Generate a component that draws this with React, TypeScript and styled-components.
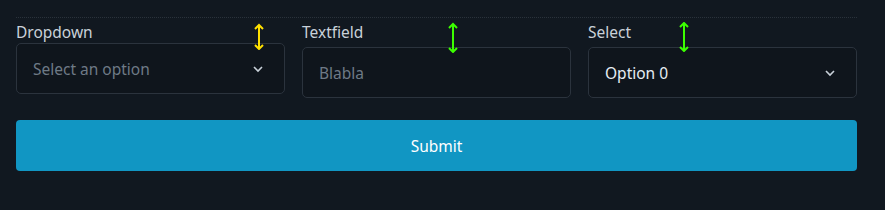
import styled, { createGlobalStyle } from 'styled-components';

const GlobalStyle = createGlobalStyle`
  html, body {
    margin: 0;
    background: #111820;
    font-family: "Noto Sans", "Open Sans", sans-serif;
  }
`;

const Page = styled.div`
  padding: 17px 28px 0 16px;
`;

const Row = styled.div`
  position: relative;
  display: grid;
  grid-template-columns: repeat(3, 1fr);
  column-gap: 17px;
  border-top: 1px dotted #2a323b;
  padding-top: 4px;
`;

const Field = styled.div`
  position: relative;
  display: flex;
  flex-direction: column;
`;

const Label = styled.label<{ $gap: number }>`
  color: #c9d1d9;
  font-size: 15.5px;
  line-height: 21px;
  margin-bottom: ${(p) => p.$gap}px;
`;

const Box = styled.div<{ $value?: boolean }>`
  display: flex;
  align-items: center;
  justify-content: space-between;
  height: 51px;
  box-sizing: border-box;
  padding: 0 20px 0 16px;
  border: 1px solid #2b333d;
  border-radius: 5px;
  background: #0f151c;
  color: ${(p) => (p.$value ? '#e6edf3' : '#6e7a86')};
  font-size: 15.5px;
`;

const Marker = styled.svg<{ $left: number }>`
  position: absolute;
  left: ${(p) => p.$left}px;
  top: 0;
`;

const SubmitButton = styled.button`
  display: block;
  width: 100%;
  height: 51px;
  margin-top: 22px;
  border: none;
  border-radius: 4px;
  background: #1196c3;
  color: #ffffff;
  font-family: inherit;
  font-size: 15.5px;
`;

const Chevron = () => (
  <svg width="12" height="8" viewBox="0 0 12 8">
    <path d="M2 2l4 4 4-4" fill="none" stroke="#c9d1d9" strokeWidth="1.6" />
  </svg>
);

const UpDown = ({ color, height, left, top }: { color: string; height: number; left: number; top: number }) => (
  <Marker $left={left} width="12" height={height + top} viewBox={`0 0 12 ${height + top}`}>
    <path
      d={`M6 ${top + 1}V${top + height - 1}M2 ${top + 5}L6 ${top + 1}L10 ${top + 5}M2 ${top + height - 5}L6 ${top + height - 1}L10 ${top + height - 5}`}
      fill="none"
      stroke={color}
      strokeWidth="2"
    />
  </Marker>
);

export default function App() {
  return (
    <>
      <GlobalStyle />
      <Page>
        <Row>
          <Field>
            <Label $gap={0}>Dropdown</Label>
            <Box>
              <span>Select an option</span>
              <Chevron />
            </Box>
            <UpDown color="#ffe000" left={237} top={2} height={26} />
          </Field>
          <Field>
            <Label $gap={4}>Textfield</Label>
            <Box>
              <span>Blabla</span>
            </Box>
            <UpDown color="#3cff00" left={145} top={1} height={30} />
          </Field>
          <Field>
            <Label $gap={4}>Select</Label>
            <Box $value>
              <span>Option 0</span>
              <Chevron />
            </Box>
            <UpDown color="#3cff00" left={90} top={0} height={30} />
          </Field>
        </Row>
        <SubmitButton>Submit</SubmitButton>
      </Page>
    </>
  );
}
